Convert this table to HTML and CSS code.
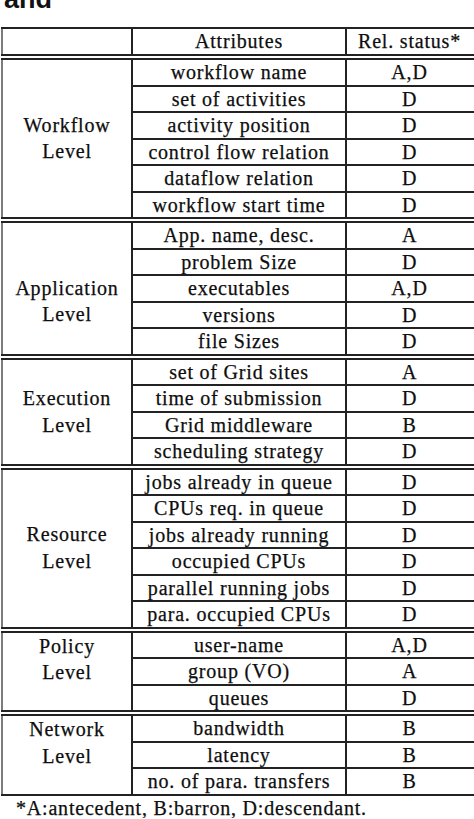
FILE: index.html
```html
<!DOCTYPE html>
<html lang="en">
<head>
<meta charset="utf-8">
<title>Attributes table</title>
<link rel="stylesheet" href="styles.css">
</head>
<body>
<div class="crop"><div class="crop-text">and</div></div>
<table class="attrs">
  <colgroup><col class="c-level"><col class="c-attr"><col class="c-rel"></colgroup>
  <thead>
    <tr><th class="level"></th><th>Attributes</th><th class="rel">Rel. status*</th></tr>
  </thead>
  <tbody>
    <tr class="grp"><td class="level off2" rowspan="6">Workflow<br>Level</td><td>workflow name</td><td class="rel">A,D</td></tr>
    <tr><td>set of activities</td><td class="rel">D</td></tr>
    <tr><td>activity position</td><td class="rel">D</td></tr>
    <tr><td>control flow relation</td><td class="rel">D</td></tr>
    <tr><td>dataflow relation</td><td class="rel">D</td></tr>
    <tr><td>workflow start time</td><td class="rel">D</td></tr>

    <tr class="grp"><td class="level off2" rowspan="5">Application<br>Level</td><td>App. name, desc.</td><td class="rel">A</td></tr>
    <tr><td>problem Size</td><td class="rel">D</td></tr>
    <tr><td>executables</td><td class="rel">A,D</td></tr>
    <tr><td>versions</td><td class="rel">D</td></tr>
    <tr><td>file Sizes</td><td class="rel">D</td></tr>

    <tr class="grp"><td class="level off1" rowspan="4">Execution<br>Level</td><td>set of Grid sites</td><td class="rel">A</td></tr>
    <tr><td>time of submission</td><td class="rel">D</td></tr>
    <tr><td>Grid middleware</td><td class="rel">B</td></tr>
    <tr><td>scheduling strategy</td><td class="rel">D</td></tr>

    <tr class="grp"><td class="level off2" rowspan="6">Resource<br>Level</td><td>jobs already in queue</td><td class="rel">D</td></tr>
    <tr><td>CPUs req. in queue</td><td class="rel">D</td></tr>
    <tr><td>jobs already running</td><td class="rel">D</td></tr>
    <tr><td>occupied CPUs</td><td class="rel">D</td></tr>
    <tr><td>parallel running jobs</td><td class="rel">D</td></tr>
    <tr><td>para. occupied CPUs</td><td class="rel">D</td></tr>

    <tr class="grp"><td class="level off0" rowspan="3">Policy<br>Level</td><td>user-name</td><td class="rel">A,D</td></tr>
    <tr><td>group (VO)</td><td class="rel">A</td></tr>
    <tr><td>queues</td><td class="rel">D</td></tr>

    <tr class="grp"><td class="level off0" rowspan="3">Network<br>Level</td><td>bandwidth</td><td class="rel">B</td></tr>
    <tr><td>latency</td><td class="rel">B</td></tr>
    <tr><td>no. of para. transfers</td><td class="rel">B</td></tr>
  </tbody>
</table>
<p class="note">*A:antecedent, B:barron, D:descendant.</p>
</body>
</html>
```

FILE: styles.css
```css
html, body {
  margin: 0;
  padding: 0;
  background: #ffffff;
  overflow: hidden;
}

body {
  width: 474px;
  color: #0e0e0e;
  font-family: "Liberation Serif", "Times New Roman", serif;
}

.crop {
  height: 9px;
  overflow: hidden;
  padding-left: 4px;
}

.crop-text {
  font-family: "Liberation Sans", Arial, sans-serif;
  font-weight: bold;
  font-size: 27px;
  line-height: 20px;
  margin-top: -11px;
  color: #111;
}

.attrs {
  border-collapse: collapse;
  table-layout: fixed;
  width: 478px;
  margin: 18px 0 0 1px;
  font-size: 20px;
  letter-spacing: 0.8px;
  -webkit-text-stroke: 0.25px #0e0e0e;
}

.c-level { width: 130px; }
.c-attr { width: 214px; }
.c-rel { width: 134px; }

.attrs th,
.attrs td {
  border: 2px solid #222222;
  padding: 0;
  height: 24.5px;
  line-height: 24.5px;
  text-align: center;
  font-weight: normal;
  white-space: nowrap;
}

.attrs th {
  height: 25px;
  border-bottom: 6px double #222222;
}

.attrs .rel {
  padding-right: 8px;
  border-right: none;
}

.attrs .level {
  border-left: 2px solid #7c7c7c;
}

.attrs td.level {
  vertical-align: top;
  line-height: 26.5px;
}

.attrs tr.grp > td {
  border-top: 6px double #222222;
}

.off0 { padding-top: 0; }
.off1 { padding-top: 25.5px !important; }
.off2 { padding-top: 51.5px !important; }

.note {
  margin: 2px 0 0 0;
  padding-left: 16px;
  font-size: 20px;
  line-height: 20px;
  letter-spacing: 0.8px;
  -webkit-text-stroke: 0.25px #0e0e0e;
}
```
